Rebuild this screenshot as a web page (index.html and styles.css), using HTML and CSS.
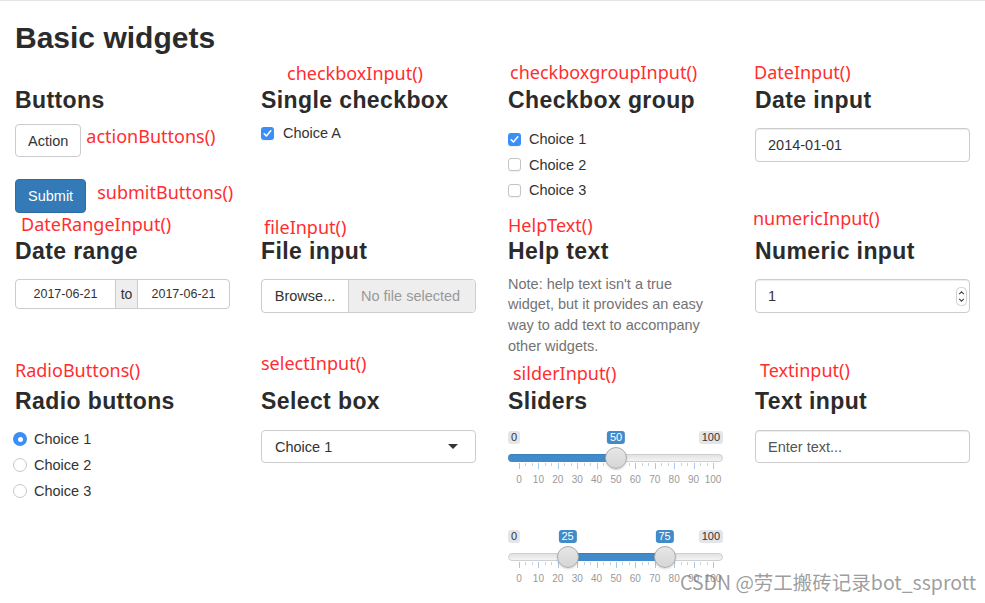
FILE: index.html
```html
<!DOCTYPE html>
<html lang="en">
<head>
<meta charset="utf-8">
<title>Basic widgets</title>
<link rel="stylesheet" href="styles.css">
</head>
<body>
<div class="topbar"></div>
<main class="page">
  <h1>Basic widgets</h1>
  <div class="grid">
    <!-- Row 1 -->
    <section class="cell r1">
      <div class="note"></div>
      <h3>Buttons</h3>
      <div class="btn-row action-row">
        <button class="btn">Action</button>
        <span class="tag">actionButtons()</span>
      </div>
      <div class="btn-row submit-row">
        <button class="btn btn-primary">Submit</button>
        <span class="tag">submitButtons()</span>
      </div>
    </section>
    <section class="cell r1">
      <div class="note"><span class="n-cbi">checkboxInput()</span></div>
      <h3>Single checkbox</h3>
      <label class="check single"><span class="cb on"><svg viewBox="0 0 13 13" width="13" height="13"><path d="M3.2 6.8 L5.4 9 L9.8 3.8" fill="none" stroke="#fff" stroke-width="1.6" stroke-linecap="round" stroke-linejoin="round"/></svg></span>Choice A</label>
    </section>
    <section class="cell r1">
      <div class="note"><span class="n-cbg">checkboxgroupInput()</span></div>
      <h3>Checkbox group</h3>
      <div class="group">
        <label class="check"><span class="cb on"><svg viewBox="0 0 13 13" width="13" height="13"><path d="M3.2 6.8 L5.4 9 L9.8 3.8" fill="none" stroke="#fff" stroke-width="1.6" stroke-linecap="round" stroke-linejoin="round"/></svg></span>Choice 1</label>
        <label class="check"><span class="cb"></span>Choice 2</label>
        <label class="check"><span class="cb"></span>Choice 3</label>
      </div>
    </section>
    <section class="cell r1">
      <div class="note"><span class="n-di">DateInput()</span></div>
      <h3>Date input</h3>
      <div class="field date-field">2014-01-01</div>
    </section>

    <!-- Row 2 -->
    <section class="cell r2">
      <div class="note"><span class="n-dri">DateRangeInput()</span></div>
      <h3>Date range</h3>
      <div class="daterange">
        <span class="d1">2017-06-21</span>
        <span class="to">to</span>
        <span class="d2">2017-06-21</span>
      </div>
    </section>
    <section class="cell r2">
      <div class="note"><span class="n-fi">fileInput()</span></div>
      <h3>File input</h3>
      <div class="file">
        <span class="browse">Browse...</span>
        <span class="nofile">No file selected</span>
      </div>
    </section>
    <section class="cell r2">
      <div class="note"><span class="n-ht">HelpText()</span></div>
      <h3>Help text</h3>
      <p class="help">Note: help text isn't a true<br>widget, but it provides an easy<br>way to add text to accompany<br>other widgets.</p>
    </section>
    <section class="cell r2">
      <div class="note"><span class="n-ni">numericInput()</span></div>
      <h3>Numeric input</h3>
      <div class="field num-field">
        <span>1</span>
        <svg class="spin" viewBox="0 0 11 19" width="11" height="19"><rect x="0.5" y="0.5" width="10" height="18" rx="4" fill="#fff" stroke="#d0d0d0"/><path d="M3.2 7.2 L5.5 4.9 L7.8 7.2" fill="none" stroke="#444" stroke-width="1.1"/><path d="M3.2 11.8 L5.5 14.1 L7.8 11.8" fill="none" stroke="#444" stroke-width="1.1"/></svg>
      </div>
    </section>

    <!-- Row 3 -->
    <section class="cell r3">
      <div class="note"><span class="n-rb">RadioButtons()</span></div>
      <h3>Radio buttons</h3>
      <div class="radios">
        <label class="radio"><span class="rb on"></span>Choice 1</label>
        <label class="radio"><span class="rb"></span>Choice 2</label>
        <label class="radio"><span class="rb"></span>Choice 3</label>
      </div>
    </section>
    <section class="cell r3">
      <div class="note"><span class="n-si">selectInput()</span></div>
      <h3>Select box</h3>
      <div class="select">
        <span>Choice 1</span>
        <svg viewBox="0 0 10 5" width="10" height="5"><path d="M0 0 L10 0 L5 5 Z" fill="#333"/></svg>
      </div>
    </section>
    <section class="cell r3">
      <div class="note"><span class="n-sl">silderInput()</span></div>
      <h3>Sliders</h3>
      <div class="slider single" style="--v:50%">
        <span class="badge min">0</span>
        <span class="badge max">100</span>
        <div class="line"></div>
        <div class="rail">
          <div class="bar"></div>
          <div class="ticks"></div>
          <span class="badge cur c1">50</span>
          <span class="handle h1"></span>
        </div>
        <div class="labels"><span>0</span><span>10</span><span>20</span><span>30</span><span>40</span><span>50</span><span>60</span><span>70</span><span>80</span><span>90</span><span>100</span></div>
      </div>
      <div class="slider double" style="--a:25%;--b:75%">
        <span class="badge min">0</span>
        <span class="badge max">100</span>
        <div class="line"></div>
        <div class="rail">
          <div class="bar"></div>
          <div class="ticks"></div>
          <span class="badge cur c1">25</span>
          <span class="badge cur c2">75</span>
          <span class="handle h1"></span>
          <span class="handle h2"></span>
        </div>
        <div class="labels"><span>0</span><span>10</span><span>20</span><span>30</span><span>40</span><span>50</span><span>60</span><span>70</span><span>80</span><span>90</span><span>100</span></div>
      </div>
    </section>
    <section class="cell r3">
      <div class="note"><span class="n-ti">Textinput()</span></div>
      <h3>Text input</h3>
      <div class="field text-field">Enter text...</div>
    </section>
  </div>
  <div class="watermark">CSDN @劳工搬砖记录bot_ssprott</div>
</main>
</body>
</html>
```

FILE: styles.css
```css
* { box-sizing: border-box; }

body {
  margin: 0;
  background: #fff;
  color: #333;
  font-family: "Liberation Sans", Arial, sans-serif;
  font-size: 14.5px;
}

.topbar { height: 1px; background: #e4e4e4; }

.page {
  position: relative;
  height: 602px;
  padding: 19px 0 0 15px;
  overflow: hidden;
}

h1 {
  margin: 0;
  font-size: 30px;
  line-height: 36px;
  font-weight: 700;
  color: #2b2b2b;
}

h3 {
  margin: 0;
  font-size: 23px;
  line-height: 26px;
  font-weight: 700;
  letter-spacing: 0.4px;
  color: #2b2b2b;
  white-space: nowrap;
}

.grid {
  display: grid;
  grid-template-columns: 246px 247px 247px 230px;
  grid-template-rows: 152px 146px auto;
  margin-top: 5px;
}

.cell {
  display: flex;
  flex-direction: column;
  align-items: flex-start;
  min-width: 0;
}

/* red annotation labels */
.note, .tag {
  font-family: "Noto Sans", "Liberation Sans", sans-serif;
  font-size: 18px;
  line-height: 22px;
  color: #ff2e2e;
  white-space: nowrap;
}
.note { height: 22px; }
.note span { display: block; }
.r1 .note { margin-bottom: 4px; }
.r2 .note { margin-bottom: 3px; }
.r3 .note { margin-bottom: 7px; }

.n-cbi { margin: 1px 0 0 26px; }
.n-cbg { margin-left: 2px; }
.n-di  { margin-left: -1px; }
.n-dri { margin-left: 6px; }
.n-fi  { margin: 3px 0 0 3px; }
.n-ht  { margin-top: 1px; }
.n-ni  { margin: -6px 0 0 -2px; }
.n-si  { margin-top: -7px; }
.n-sl  { margin: 3px 0 0 5px; }
.n-ti  { margin-left: 5px; }

/* buttons */
.btn-row { display: flex; align-items: center; }
.action-row { margin-top: 11px; gap: 5px; }
.submit-row { margin-top: 22px; gap: 11px; }
.btn-row .tag { margin-bottom: 9px; }

.btn {
  height: 33px;
  padding: 0 12px;
  border: 1px solid #ccc;
  border-radius: 4px;
  background: #fff;
  color: #333;
  font-family: "Liberation Sans", Arial, sans-serif;
  font-size: 14.5px;
}
.btn-primary {
  height: 34px;
  background: #337ab7;
  border-color: #2e6da4;
  color: #fff;
}

/* checkboxes */
.check {
  display: flex;
  align-items: center;
  height: 20px;
  line-height: 20px;
  gap: 8px;
}
.check.single { margin-top: 10px; gap: 9px; }
.group { margin-top: 16px; display: flex; flex-direction: column; gap: 5.5px; }

.cb {
  width: 13px;
  height: 13px;
  border-radius: 3px;
  border: 1px solid #c4c4c4;
  background: #fff;
  display: block;
  box-shadow: 0 1px 1px rgba(0,0,0,.06);
}
.cb.on {
  border: none;
  background: #3a8ef6;
}
.cb svg { display: block; }

/* radios */
.radios { margin-top: 15px; display: flex; flex-direction: column; gap: 6px; }
.radio {
  display: flex;
  align-items: center;
  height: 20px;
  gap: 7px;
  margin-left: -2px;
}
.rb {
  width: 14px;
  height: 14px;
  border-radius: 50%;
  border: 1px solid #c8c8c8;
  background: #fff;
  display: flex;
  align-items: center;
  justify-content: center;
}
.rb.on { border: none; background: #3a8ef6; }
.rb.on::after {
  content: "";
  width: 5px;
  height: 5px;
  border-radius: 50%;
  background: #fff;
}

/* text fields */
.field {
  width: 215px;
  height: 34px;
  border: 1px solid #ccc;
  border-radius: 4px;
  padding: 0 12px;
  display: flex;
  align-items: center;
  color: #333;
  box-shadow: inset 0 1px 1px rgba(0,0,0,.075);
}
.date-field { margin-top: 15px; }
.num-field { margin-top: 15px; justify-content: space-between; padding-right: 2px; }
.spin { display: block; }
.text-field { margin-top: 16px; height: 33px; color: #555; }

.daterange {
  margin-top: 15px;
  width: 215px;
  height: 30px;
  border: 1px solid #ccc;
  border-radius: 4px;
  display: flex;
  font-size: 12.5px;
  overflow: hidden;
}
.daterange span { display: flex; align-items: center; justify-content: center; }
.daterange .d1 { width: 99px; }
.daterange .to {
  width: 23px;
  background: #eee;
  border-left: 1px solid #ccc;
  border-right: 1px solid #ccc;
  font-size: 14px;
}
.daterange .d2 { flex: 1; }

.file {
  margin-top: 15px;
  width: 215px;
  height: 34px;
  border: 1px solid #ccc;
  border-radius: 4px;
  display: flex;
  overflow: hidden;
}
.file span { display: flex; align-items: center; }
.browse { width: 86px; justify-content: center; color: #333; }
.nofile {
  flex: 1;
  padding-left: 12px;
  background: #eee;
  border-left: 1px solid #ccc;
  color: #999;
}

.help {
  margin: 9.7px 0 0;
  font-size: 14.5px;
  line-height: 20.7px;
  color: #737373;
  white-space: nowrap;
}

.select {
  margin-top: 16px;
  width: 215px;
  height: 33px;
  border: 1px solid #ccc;
  border-radius: 4px;
  padding: 0 17px 0 13px;
  display: flex;
  align-items: center;
  justify-content: space-between;
}
.select svg { display: block; }

/* sliders (ion.rangeSlider look) */
.slider {
  position: relative;
  width: 215px;
  height: 58px;
  margin-top: 16px;
}
.slider.double { margin-top: 41px; }

.badge {
  position: absolute;
  top: 1px;
  height: 13px;
  padding: 0 3px;
  border-radius: 3px;
  background: #e3e5e8;
  color: #333;
  font-size: 11px;
  line-height: 13px;
  white-space: nowrap;
}
.badge.min { left: 0; }
.badge.max { right: 0; }
.badge.cur {
  background: #428bca;
  color: #fff;
  transform: translateX(-50%);
  z-index: 2;
}

.line {
  position: absolute;
  left: 0;
  right: 0;
  top: 24px;
  height: 8px;
  border: 1px solid #cfcfcf;
  border-radius: 4px;
  background: linear-gradient(#e2e2e2, #f4f4f4);
}

.rail {
  position: absolute;
  left: 11px;
  width: 194px;
  top: 0;
  bottom: 0;
}

.bar {
  position: absolute;
  top: 24px;
  height: 8px;
  background: #428bca;
  border-top: 1px solid #3b7fbb;
}
.single .bar {
  left: -11px;
  width: calc(var(--v) + 11px);
  border-radius: 4px 0 0 4px;
}
.double .bar {
  left: var(--a);
  width: calc(var(--b) - var(--a));
}

.single .c1, .single .h1 { left: var(--v); }
.double .c1, .double .h1 { left: var(--a); }
.double .c2, .double .h2 { left: var(--b); }

.handle {
  position: absolute;
  top: 17px;
  width: 22px;
  height: 22px;
  margin-left: -11px;
  border-radius: 50%;
  border: 1px solid #ababab;
  background: linear-gradient(#e6e6e6, #d6d6d6);
  box-shadow: 0 1px 2px rgba(0,0,0,.15);
  z-index: 3;
}

.ticks {
  position: absolute;
  left: -0.5px;
  top: 33px;
  width: 196px;
  height: 6px;
  background:
    repeating-linear-gradient(90deg, #a9c8e8 0 1px, transparent 1px 19.4px),
    repeating-linear-gradient(90deg, #c7d2dd 0 1px, transparent 1px 6.4667px);
  background-size: 100% 6px, 100% 3px;
  background-repeat: no-repeat;
}

.labels {
  position: absolute;
  left: 1.3px;
  top: 44px;
  width: 213.4px;
  display: grid;
  grid-template-columns: repeat(11, 1fr);
  text-align: center;
  font-size: 10px;
  line-height: 11px;
  color: #999;
}

.watermark {
  position: absolute;
  left: 680px;
  top: 569px;
  font-family: "Noto Sans CJK SC", "Noto Sans", sans-serif;
  font-size: 19.5px;
  line-height: 24px;
  color: rgba(120,120,120,.72);
  white-space: nowrap;
  z-index: 5;
}
```
